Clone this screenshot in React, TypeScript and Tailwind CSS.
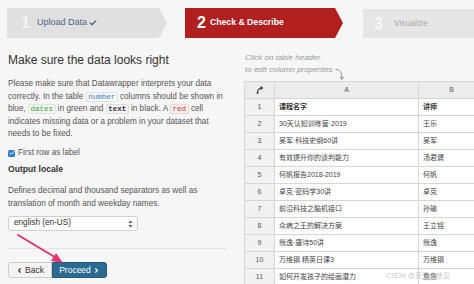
import React from "react"
import { ChevronLeft, ChevronRight, Check } from "lucide-react"

const rows: [string, string][] = [
  ["课程名字", "讲师"],
  ["30天认知训练营·2019", "王乐"],
  ["吴军·科技史纲60讲", "吴军"],
  ["有效提升你的谈判能力", "汤君健"],
  ["何帆报告2018-2019", "何帆"],
  ["卓克·密码学30讲", "卓克"],
  ["前沿科技之脑机接口", "孙瑜"],
  ["众病之王的解决方案", "王立铭"],
  ["熊逸·唐诗50讲", "熊逸"],
  ["万维钢 精英日课3", "万维钢"],
  ["如何开发孩子的绘画潜力", "詹詹"],
]

const arrowClip =
  "[clip-path:polygon(0_0,calc(100%_-_8px)_0,100%_50%,calc(100%_-_8px)_100%,0_100%)]"

function Steps() {
  return (
    <div className="flex pt-[8px] pl-[7px] h-[38px]">
      <div className={`flex items-center w-[160px] h-[30px] bg-[#e0e0e0] pl-[14px] ${arrowClip}`}>
        <span className="text-[16px] font-bold text-[#f6f6f6] leading-none">1</span>
        <span className="ml-[7px] text-[9px] text-[#4d6a85]">Upload Data</span>
        <Check className="ml-[2px] w-[8px] h-[8px] text-[#4d6a85]" strokeWidth={4} />
      </div>
      <div className={`ml-[18px] flex items-center w-[158px] h-[30px] bg-[#b21f1f] pl-[12px] ${arrowClip}`}>
        <span className="text-[16px] font-bold text-white leading-none">2</span>
        <span className="ml-[4px] text-[8.7px] font-bold text-white">Check &amp; Describe</span>
      </div>
      <div className="ml-[20px] flex-1 flex items-center h-[29px] mt-[1px] bg-[#e6e6e6] pl-[11px]">
        <span className="text-[16px] font-bold text-[#f7f7f7] leading-none">3</span>
        <span className="ml-[11px] text-[8.5px] text-[#a9a9a9]">Visualize</span>
      </div>
    </div>
  )
}

function Code({ children, tone }: { children: React.ReactNode; tone: string }) {
  return (
    <code
      className={`px-[1.5px] border rounded-[2px] text-[7.5px] [font-family:'Liberation_Mono',monospace] ${tone}`}
    >
      {children}
    </code>
  )
}

function LeftPanel() {
  return (
    <div className="w-[236px] shrink-0 pl-[8px] flex flex-col text-[#555]">
      <h2 className="mt-[15px] text-[12px] leading-[14px] text-[#333]">Make sure the data looks right</h2>
      <p className="mt-[11px] text-[8.2px] leading-[12.5px]">
        Please make sure that Datawrapper interprets your data
        <br />
        correctly. In the table{" "}
        <Code tone="text-[#3f7fb6] bg-[#f7f8fa] border-[#dde2e8]">number</Code> columns should be shown in
        <br />
        blue, <Code tone="text-[#4c9c55] bg-[#eff7ef] border-[#d6e8d6]">dates</Code> in green and{" "}
        <Code tone="text-[#333] bg-[#f3f3f3] border-[#ddd] font-bold">text</Code> in black. A{" "}
        <Code tone="text-[#c9383a] bg-[#fbeeee] border-[#efd4d4]">red</Code> cell
        <br />
        indicates missing data or a problem in your dataset that
        <br />
        needs to be fixed.
      </p>
      <label className="mt-[6.5px] flex items-center gap-[3px] text-[8.2px] leading-[12px]">
        <span className="w-[7px] h-[7px] rounded-[1.5px] bg-[#2f7fd0] flex items-center justify-center">
          <Check className="w-[6px] h-[6px] text-white" strokeWidth={4} />
        </span>
        First row as label
      </label>
      <div className="mt-[4px] text-[8.6px] leading-[12px] font-bold text-[#333]">Output locale</div>
      <p className="mt-[8.5px] text-[8.2px] leading-[13px]">
        Defines decimal and thousand separators as well as
        <br />
        translation of month and weekday names.
      </p>
      <div className="mt-[6.5px] w-[130px] h-[15px] bg-white border border-[#cfcfcf] rounded-[3px] flex items-center justify-between pl-[5px] pr-[4px]">
        <span className="text-[8.2px] text-[#333]">english (en-US)</span>
        <svg width="5" height="8" viewBox="0 0 5 8">
          <path d="M0.5 3 L2.5 0.5 L4.5 3 Z M0.5 5 L2.5 7.5 L4.5 5 Z" fill="#555" />
        </svg>
      </div>
      <div className="mt-[17px] w-[219px] border-t border-[#e4e4e4]" />
      <div className="mt-[13px] flex">
        <button className="w-[44px] h-[16px] flex items-center justify-center gap-[2px] bg-[#f4f4f4] border border-[#cdcdcd] rounded-l-[3px] text-[8.5px] text-[#333]">
          <ChevronLeft className="w-[7px] h-[7px]" strokeWidth={4} />
          Back
        </button>
        <button className="w-[55px] h-[16px] flex items-center justify-center gap-[2px] bg-[#2b6a91] border border-[#245b7d] rounded-r-[3px] text-[8.5px] text-white">
          Proceed
          <ChevronRight className="w-[7px] h-[7px]" strokeWidth={4} />
        </button>
      </div>
    </div>
  )
}

function RightPanel() {
  return (
    <div className="flex-1 min-w-0 pl-[8px] flex flex-col">
      <div className="mt-[14px] pl-[1px] text-[8px] leading-[12px] italic text-[#9a9a9a]">
        <div>Click on table header</div>
        <div className="flex items-start h-[12px]">
          to edit column properties
          <svg width="12" height="14" viewBox="0 0 12 14" className="ml-[2px] mt-[4px] shrink-0 overflow-visible">
            <path d="M0.5 1.5 Q7 0.5 7 11" stroke="#888" strokeWidth="0.9" fill="none" />
            <path d="M5 8.5 L7 11.5 L9 8.5" stroke="#888" strokeWidth="0.9" fill="none" />
          </svg>
        </div>
      </div>
      <table className="mt-[5px] table-fixed border-collapse w-[240px] min-w-[240px] text-[7px] [font-family:'Liberation_Sans','Noto_Sans_CJK_SC',sans-serif]">
        <colgroup>
          <col className="w-[30px]" />
          <col className="w-[144px]" />
          <col className="w-[66px]" />
        </colgroup>
        <thead>
          <tr className="h-[17px] bg-[#ececec] text-[#555]">
            <th className="border border-[#d6d6d6] font-normal">
              <svg width="8" height="8" viewBox="0 0 8 8" className="mx-auto">
                <path d="M1.5 7 Q1.5 2 6 2" stroke="#333" strokeWidth="1.2" fill="none" />
                <path d="M4.5 0.5 L6.5 2 L4.5 3.5" stroke="#333" strokeWidth="1.1" fill="none" />
                <circle cx="1.5" cy="7" r="0.9" fill="#333" />
              </svg>
            </th>
            <th className="border border-[#d6d6d6] font-normal">A</th>
            <th className="border border-[#d6d6d6] font-normal">B</th>
          </tr>
        </thead>
        <tbody>
          {rows.map(([a, b], i) => (
            <tr key={i} className={`h-[17px] ${i === 0 ? "font-bold text-[#333]" : "text-[#444]"}`}>
              <td className="border border-[#d6d6d6] bg-[#f1f1f1] text-center font-normal text-[#555]">{i + 1}</td>
              <td className="border border-[#d6d6d6] bg-white pl-[4px] whitespace-nowrap">{a}</td>
              <td className="border border-[#d6d6d6] bg-white pl-[4px] whitespace-nowrap">{b}</td>
            </tr>
          ))}
        </tbody>
      </table>
    </div>
  )
}

export default function App() {
  return (
    <div className="relative w-[474px] h-[284px] overflow-hidden bg-[#f6f6f6] [font-family:'Liberation_Sans','Noto_Sans_CJK_SC',sans-serif]">
      <Steps />
      <div className="flex">
        <LeftPanel />
        <RightPanel />
      </div>
      {/* pink annotation arrow */}
      <svg className="absolute left-0 top-0 pointer-events-none" width="474" height="284">
        <line x1="18" y1="235" x2="58" y2="259" stroke="#e8336e" strokeWidth="2" strokeLinecap="round" />
        <path d="M51 261 L63 263 L56 253 Z" fill="#e8336e" />
      </svg>
      <div className="absolute left-[386px] top-[271px] text-[7px] text-[#c4c4c4] opacity-90">CSDN @亚卫大侠见</div>
    </div>
  )
}
